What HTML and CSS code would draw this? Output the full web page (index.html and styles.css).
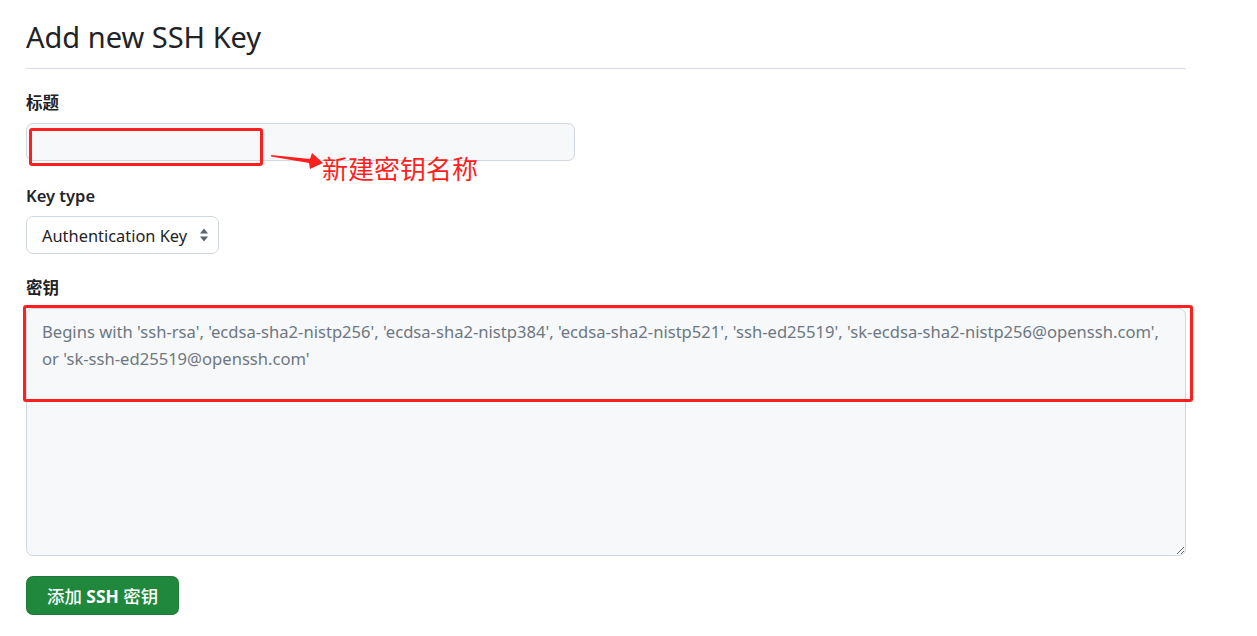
FILE: index.html
```html
<!DOCTYPE html>
<html>
<head>
  <title>Add new SSH Key</title>
  <meta name="viewport" content="width=device-width, initial-scale=1.0">
  <link rel="stylesheet" href="styles.css">
</head>
<body>

<div class="page">
  <div class="subhead">
    <h1>Add new SSH Key</h1>
  </div>

  <div class="form-group group-title">
    <label>标题</label>
    <div class="field">
      <input class="input" type="text">
      <div class="mark mark-title"></div>
      <svg class="arrow" width="60" height="26" viewBox="0 0 60 26">
        <polygon points="0,8 39,12 41,6 52,16 39,22 38,16 0,9.5" fill="#ff1f1f"/>
      </svg>
      <span class="note">新建密钥名称</span>
    </div>
  </div>

  <div class="form-group">
    <label>Key type</label>
    <div class="select-wrap">
      <select class="select">
        <option>Authentication Key</option>
        <option>Signing Key</option>
      </select>
      <svg class="caret" width="10" height="16" viewBox="0 0 10 16">
        <path d="M5 1.5 L9 6.5 H1 Z" fill="#59636e"/>
        <path d="M5 14.5 L9 9.5 H1 Z" fill="#59636e"/>
      </svg>
    </div>
  </div>

  <div class="form-group">
    <label>密钥</label>
    <div class="field">
      <textarea class="textarea" placeholder="Begins with 'ssh-rsa', 'ecdsa-sha2-nistp256', 'ecdsa-sha2-nistp384', 'ecdsa-sha2-nistp521', 'ssh-ed25519', 'sk-ecdsa-sha2-nistp256@openssh.com', or 'sk-ssh-ed25519@openssh.com'"></textarea>
      <div class="mark mark-key"></div>
    </div>
  </div>

  <button class="btn">添加 <b>SSH</b> 密钥</button>
</div>

</body>
</html>
```

FILE: styles.css
```css
* {
  margin: 0;
  padding: 0;
  box-sizing: border-box;
  font-family: 'Noto Sans', 'Noto Sans CJK SC', sans-serif;
}

body {
  background: #ffffff;
  color: #1f2328;
}

.page {
  width: 1160px;
  margin-left: 26px;
  padding-top: 18px;
}

.subhead {
  border-bottom: 1px solid #d8dee4;
  padding-bottom: 13px;
  margin-bottom: 23px;
}

h1 {
  font-size: 29px;
  font-weight: 400;
  line-height: 37px;
}

.form-group {
  margin-bottom: 23px;
}

.group-title {
  margin-bottom: 24px;
}

label {
  display: block;
  font-size: 16.5px;
  font-weight: 600;
  line-height: 22px;
  margin-bottom: 9px;
}

.field {
  position: relative;
}

.input {
  display: block;
  width: 549px;
  height: 38px;
  border: 1px solid #d0d7de;
  border-radius: 7px;
  background: #f6f8fa;
  outline: none;
  font-size: 16.5px;
  padding: 0 15px;
}

.mark {
  position: absolute;
  border: 3px solid #ff1f1f;
  border-radius: 3px;
}

.mark-title {
  left: 3px;
  top: 5px;
  width: 234px;
  height: 38px;
}

.arrow {
  position: absolute;
  left: 245px;
  top: 24px;
}

.note {
  position: absolute;
  left: 296px;
  top: 30px;
  font-size: 26px;
  line-height: 32px;
  color: #ff1f1f;
  white-space: nowrap;
}

.select-wrap {
  position: relative;
  width: 193px;
}

.select {
  display: block;
  appearance: none;
  -webkit-appearance: none;
  width: 193px;
  height: 38px;
  border: 1px solid #d0d7de;
  border-radius: 7px;
  background: #ffffff;
  color: #1f2328;
  font-size: 16.4px;
  padding: 0 22px 0 15px;
  outline: none;
}

.caret {
  position: absolute;
  right: 10px;
  top: 11px;
}

.textarea {
  display: block;
  width: 1160px;
  height: 248px;
  border: 1px solid #d0d7de;
  border-radius: 7px;
  background: #f6f8fa;
  font-size: 16.6px;
  line-height: 27px;
  padding: 9px 15px;
  outline: none;
  color: #1f2328;
}

.textarea::placeholder {
  color: #6e7781;
}

.mark-key {
  left: -3px;
  top: -3px;
  width: 1170px;
  height: 97px;
}

.btn {
  display: block;
  margin-top: -3px;
  height: 39px;
  padding: 0 20px;
  border: 1px solid rgba(31, 35, 40, 0.15);
  border-radius: 7px;
  background: #1f883d;
  color: #ffffff;
  font-size: 17.4px;
  font-weight: 500;
}

.btn b {
  font-weight: 700;
}
```
